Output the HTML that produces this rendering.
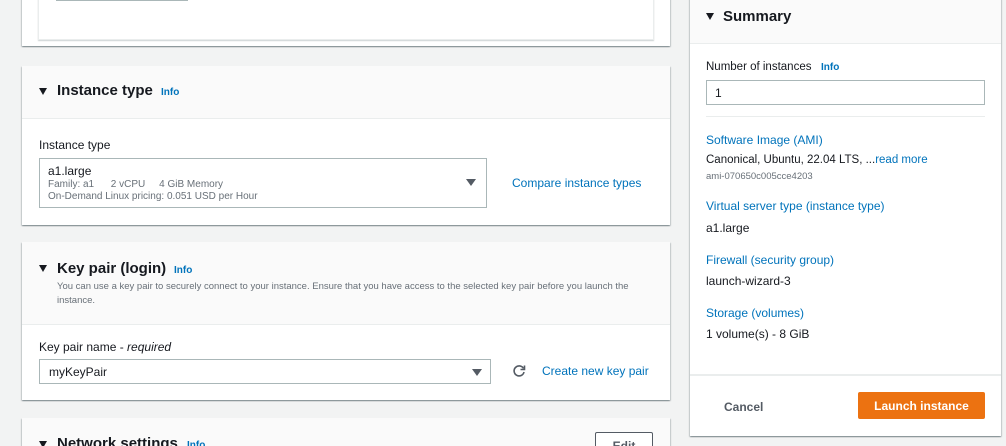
<!DOCTYPE html>
<html><head><style>
*{box-sizing:border-box;margin:0;padding:0}
html,body{width:1006px;height:446px;overflow:hidden}
body{background:#f2f3f3;font-family:"Liberation Sans",sans-serif;color:#16191f;position:relative;font-size:12px}
.p{position:absolute;background:#fff;box-shadow:0 1px 1px rgba(0,28,36,.3),1px 1px 1px rgba(0,28,36,.15),-1px 1px 1px rgba(0,28,36,.15)}
.hd{position:absolute;left:0;right:0;top:0;background:#fafafa;border-bottom:1px solid #eaeded}
.a{position:absolute}
.tri{position:absolute;width:0;height:0;border-left:4.5px solid transparent;border-right:4.5px solid transparent;border-top:7px solid #16191f}
.t{font-size:15px;font-weight:bold;position:absolute}
.info{color:#0073bb;font-size:10px;font-weight:bold;position:absolute}
.lk{color:#0073bb;position:absolute}
.box{position:absolute;border:1px solid #aab7b8;background:#fff}
.dt{position:absolute;width:0;height:0;border-left:5px solid transparent;border-right:5px solid transparent;border-top:7px solid #545b64}
.s{font-size:10px;color:#687078}
</style></head><body>
<div class="p" style="left:22px;top:-10px;width:648px;height:56px">
 <div class="a" style="left:16px;top:0;width:616px;height:50px;border:1px solid #eaeded;border-top:none;box-shadow:0 1px 1px rgba(0,28,36,.2)"></div>
 <div class="a" style="left:34px;top:0;width:132px;height:11px;border-bottom:2px solid #aab7b8"></div>
</div>

<div class="p" style="left:22px;top:66px;width:648px;height:159px">
 <div class="hd" style="height:53px"></div>
 <div class="tri" style="left:17px;top:22px"></div>
 <div class="t" style="left:35px;top:16px">Instance type</div>
 <div class="info" style="left:139px;top:21px">Info</div>
 <div class="a" style="left:17px;top:72px;font-size:12px">Instance type</div>
 <div class="box" style="left:17px;top:92px;width:448px;height:50px">
  <div class="a" style="left:8px;top:5px;font-size:12px">a1.large</div>
  <div class="a s" style="left:8px;top:20px">Family: a1 &nbsp; &nbsp; &nbsp;2 vCPU &nbsp; &nbsp; 4 GiB Memory</div>
  <div class="a s" style="left:8px;top:32px">On-Demand Linux pricing: 0.051 USD per Hour</div>
  <div class="dt" style="left:426px;top:20px"></div>
 </div>
 <div class="lk" style="left:490px;top:110px">Compare instance types</div>
</div>

<div class="p" style="left:22px;top:242px;width:648px;height:158px">
 <div class="hd" style="height:83px"></div>
 <div class="tri" style="left:17px;top:23px"></div>
 <div class="t" style="left:35px;top:18px">Key pair (login)</div>
 <div class="info" style="left:152px;top:23px">Info</div>
 <div class="a s" style="left:35px;top:38px;width:600px;line-height:14px;font-size:9.5px">You can use a key pair to securely connect to your instance. Ensure that you have access to the selected key pair before you launch the instance.</div>
 <div class="a" style="left:17px;top:98px">Key pair name - <i>required</i></div>
 <div class="box" style="left:17px;top:117px;width:452px;height:25px">
  <div class="a" style="left:9px;top:5px">myKeyPair</div>
  <div class="dt" style="left:432px;top:9px"></div>
 </div>
 <svg class="a" style="left:490px;top:122px" width="14" height="14" viewBox="0 0 14 14"><path d="M11.5 4.5A5 5 0 1 0 12 8" fill="none" stroke="#545b64" stroke-width="1.6"/><path d="M12.5 1.5v4h-4" fill="none" stroke="#545b64" stroke-width="1.6"/></svg>
 <div class="lk" style="left:520px;top:122px">Create new key pair</div>
</div>

<div class="p" style="left:22px;top:418px;width:648px;height:40px;background:#fafafa">
 <div class="tri" style="left:17px;top:23px"></div>
 <div class="t" style="left:35px;top:17px">Network settings</div>
 <div class="info" style="left:165px;top:22px">Info</div>
 <div class="a" style="left:573px;top:14px;width:58px;height:26px;border:1px solid #545b64;border-radius:2px;background:#fff;text-align:center;font-weight:bold;color:#545b64;padding-top:6px">Edit</div>
</div>

<div class="p" style="left:690px;top:-5px;width:311px;height:441px">
 <div class="hd" style="height:49px"></div>
 <div class="tri" style="left:16px;top:18px"></div>
 <div class="t" style="left:33px;top:13px">Summary</div>
 <div class="a" style="left:16px;top:66px;font-size:11.5px">Number of instances</div>
 <div class="info" style="left:131px;top:67px">Info</div>
 <div class="box" style="left:16px;top:85px;width:279px;height:25px"><div class="a" style="left:8px;top:5px">1</div></div>
 <div class="a" style="left:16px;top:121px;width:279px;border-top:1px solid #eaeded"></div>
 <div class="lk" style="left:16px;top:138px">Software Image (AMI)</div>
 <div class="a" style="left:16px;top:159px;font-size:11.5px">Canonical, Ubuntu, 22.04 LTS, ...<span style="color:#0073bb">read more</span></div>
 <div class="a s" style="left:16px;top:176px;font-size:9.5px">ami-070650c005cce4203</div>
 <div class="lk" style="left:16px;top:204px">Virtual server type (instance type)</div>
 <div class="a" style="left:16px;top:226px">a1.large</div>
 <div class="lk" style="left:16px;top:258px">Firewall (security group)</div>
 <div class="a" style="left:16px;top:279px">launch-wizard-3</div>
 <div class="lk" style="left:16px;top:311px">Storage (volumes)</div>
 <div class="a" style="left:16px;top:332px">1 volume(s) - 8 GiB</div>
 <div class="a" style="left:0;right:0;top:379px;border-top:2px solid #eaeded"></div>
 <div class="a" style="left:34px;top:405px;font-weight:bold;color:#545b64">Cancel</div>
 <div class="a" style="left:168px;top:397px;width:127px;height:27px;background:#ec7211;border-radius:2px;color:#fff;font-weight:bold;text-align:center;padding-top:7px">Launch instance</div>
</div>
</body></html>
